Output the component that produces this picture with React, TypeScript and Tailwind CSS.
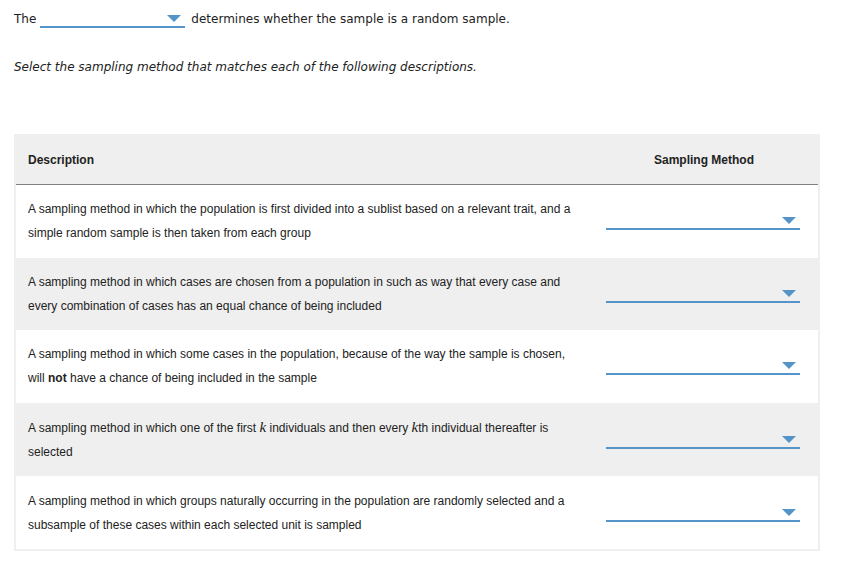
import React from "react";

const Tri = () => (
  <svg width="14" height="7" viewBox="0 0 14 7" className="block">
    <polygon points="0,0 14,0 7,7" fill="#5594c8" />
  </svg>
);

const K = () => (
  <span className="italic text-[15px]" style={{ fontFamily: '"Liberation Serif", serif' }}>
    k
  </span>
);

const rows: React.ReactNode[] = [
  <>
    A sampling method in which the population is first divided into a sublist based on a relevant trait, and a simple random sample is then taken from each group
  </>,
  <>
    A sampling method in which cases are chosen from a population in such as way that every case and every combination of cases has an equal chance of being included
  </>,
  <>
    A sampling method in which some cases in the population, because of the way the sample is chosen, will <b>not</b> have a chance of being included in the sample
  </>,
  <>
    A sampling method in which one of the first <K /> individuals and then every <K />th individual thereafter is selected
  </>,
  <>
    A sampling method in which groups naturally occurring in the population are randomly selected and a subsample of these cases within each selected unit is sampled
  </>,
];

export default function App() {
  return (
    <div className="w-[850px] h-[571px] bg-white px-[14px] pt-[9px] text-[#222]">
      <div
        className="flex h-[20px] items-start text-[12px] leading-[20px]"
        style={{ fontFamily: '"DejaVu Sans", Verdana, sans-serif' }}
      >
        <span>The</span>
        <div className="ml-[4px] mr-[6px] flex h-[19px] w-[145px] justify-end border-b-2 border-[#5594c8] pr-[4px] pt-[6px]">
          <Tri />
        </div>
        <span>determines whether the sample is a random sample.</span>
      </div>
      <div
        className="mt-[28px] text-[12px] italic leading-[20px]"
        style={{ fontFamily: '"DejaVu Sans", Verdana, sans-serif' }}
      >
        Select the sampling method that matches each of the following descriptions.
      </div>
      <div
        className="mt-[57px] w-[806px] border-2 border-[#efefef] text-[12px]"
        style={{ fontFamily: '"Liberation Sans", Arial, sans-serif' }}
      >
        <div className="grid h-[49px] grid-cols-[574px_228px] items-center border-b border-[#808080] bg-[#efefef] font-bold">
          <div className="px-[12px]">Description</div>
          <div className="text-center">Sampling Method</div>
        </div>
        {rows.map((r, i) => (
          <div
            key={i}
            className={`grid grid-cols-[574px_228px] items-center ${i % 2 === 1 ? "bg-[#efefef]" : "bg-white"}`}
          >
            <div className="px-[12px] py-[12.3px] leading-[24px]">{r}</div>
            <div className="flex pl-[16px]">
              <div className="flex h-[18px] w-[194px] justify-end border-b-2 border-[#5594c8] pr-[4px] pt-[5px]">
                <Tri />
              </div>
            </div>
          </div>
        ))}
      </div>
    </div>
  );
}
